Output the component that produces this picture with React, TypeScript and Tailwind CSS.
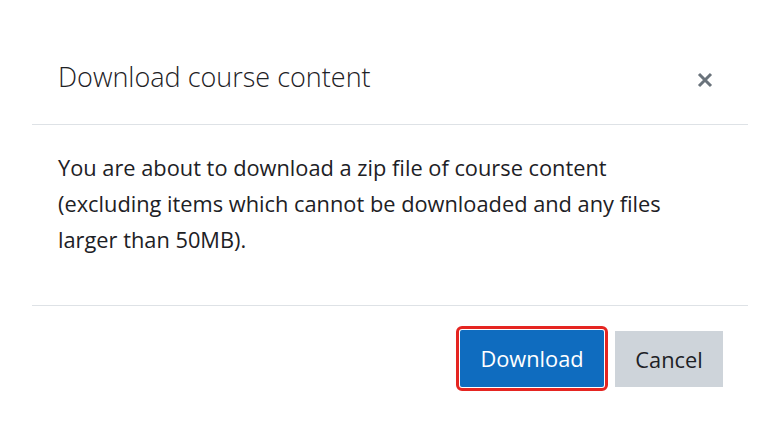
export default function App() {
  return (
    <div className="min-h-screen bg-white pl-[32px] pr-[31px]" style={{ fontFamily: '"Open Sans", "Noto Sans", sans-serif' }}>
      {/* Header */}
      <div className="flex items-start justify-between border-b border-[#dee2e6] pl-[26px] pr-[35px] pt-[60px] pb-[31px]">
        <h5 className="text-[27px] leading-[33px] font-light text-[#1d2125]">Download course content</h5>
        <button className="mt-[12px] text-[#6a737b]">
          <svg width="16" height="16" viewBox="0 0 16 16" fill="none" stroke="currentColor" strokeWidth="3" strokeLinecap="butt">
            <path d="M2 2 14 14M14 2 2 14" />
          </svg>
        </button>
      </div>

      {/* Body */}
      <div className="pl-[26px] pr-[50px] pt-[25px] pb-[47px]">
        <p className="text-[21.8px] leading-[36px] text-[#1d2125]">
          You are about to download a zip file of course content (excluding items which cannot be downloaded and any files larger than 50MB).
        </p>
      </div>

      {/* Footer */}
      <div className="flex justify-end gap-[11px] border-t border-[#dee2e6] pr-[25px] pt-[24px]">
        <button className="h-[57px] w-[144px] bg-[#0f6cbf] pt-[2px] text-[21.8px] text-white outline-[3px] outline-solid outline-[#e52521] outline-offset-[1px] rounded-[2px]">
          Download
        </button>
        <button className="mt-[1px] h-[56px] w-[108px] bg-[#ced4da] pt-[2px] text-[21.8px] text-[#1d2125]">
          Cancel
        </button>
      </div>
    </div>
  )
}
